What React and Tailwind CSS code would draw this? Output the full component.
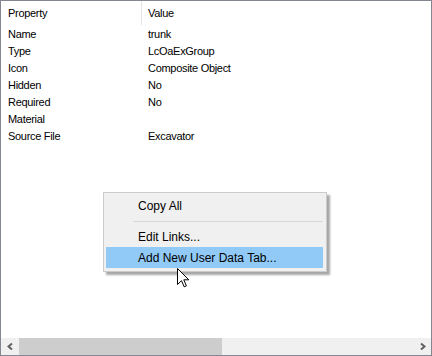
const rows = [
  ['Name', 'trunk'],
  ['Type', 'LcOaExGroup'],
  ['Icon', 'Composite Object'],
  ['Hidden', 'No'],
  ['Required', 'No'],
  ['Material', ''],
  ['Source File', 'Excavator'],
];

function Chevron({ dir }) {
  const d = dir === 'left' ? 'M5 0.5 L1.5 3.5 L5 6.5' : 'M1 0.5 L4.5 3.5 L1 6.5';
  return (
    <svg width="6" height="7" viewBox="0 0 6 7">
      <path d={d} fill="none" stroke="#606060" strokeWidth="2" />
    </svg>
  );
}

function Cursor() {
  return (
    <svg width="13" height="20" viewBox="0 0 13 20" className="absolute left-[176px] top-[267px]">
      <path
        d="M0.5 0.5 L0.5 16.5 L4.5 12.7 L7.2 18.8 L9.4 17.9 L6.8 11.8 L11.8 11.8 Z"
        fill="#fff"
        stroke="#000"
        strokeWidth="1"
        strokeLinejoin="miter"
      />
    </svg>
  );
}

export default function App() {
  return (
    <div className="relative w-[432px] h-[356px] bg-white border border-[#828790] flex flex-col font-['Liberation_Sans',Arial,sans-serif] text-black overflow-hidden">
      <div className="flex-1 text-[11px] tracking-[-0.3px]">
        {/* header */}
        <div className="flex h-[25px] items-center">
          <div className="w-[140px] pl-[7px]">Property</div>
          <div className="w-px h-[24px] self-start bg-[#e5e5e5]" />
          <div className="pl-[6px]">Value</div>
        </div>
        {rows.map(([k, v]) => (
          <div key={k} className="flex h-[17px] items-center">
            <div className="w-[141px] pl-[7px]">{k}</div>
            <div className="pl-[6px]">{v}</div>
          </div>
        ))}
      </div>

      {/* horizontal scrollbar */}
      <div className="h-[17px] bg-[#f0f0f0] flex items-center">
        <div className="w-[18px] flex justify-center">
          <Chevron dir="left" />
        </div>
        <div className="w-[203px] h-full bg-[#cdcdcd]" />
        <div className="flex-1" />
        <div className="w-[17px] flex justify-center">
          <Chevron dir="right" />
        </div>
      </div>

      {/* context menu */}
      <div className="absolute left-[102px] top-[191px] w-[224px] h-[80px] bg-[#f0f0f0] border border-[#cccccc] shadow-[3px_3px_2px_rgba(0,0,0,0.35)] pt-[2px] pl-[2px] pr-[3px] font-['Liberation_Sans',Arial,sans-serif] text-[12px]">
        <div className="h-[22px] flex items-center pl-[32px]">Copy All</div>
        <div className="h-[9px] pt-[4px] pl-[27px]">
          <div className="h-px bg-[#d7d7d7]" />
        </div>
        <div className="h-[21px] flex items-center pl-[32px]">Edit Links...</div>
        <div className="h-[21px] flex items-center pl-[32px] bg-[#91c9f7]">Add New User Data Tab...</div>
      </div>

      <Cursor />
    </div>
  );
}
